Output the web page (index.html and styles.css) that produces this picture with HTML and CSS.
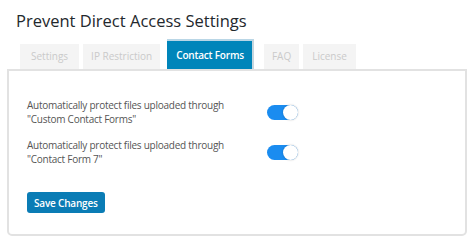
FILE: index.html
```html
<!DOCTYPE html>
<html lang="en">
<head>
    <meta charset="UTF-8">
    <title>Prevent Direct Access Settings</title>
    <link rel="stylesheet" href="styles.css">
</head>
<body>
    <div class="wrap">
        <h1 class="title">Prevent Direct Access Settings</h1>
        <nav class="tabs">
            <a class="tab tab-settings">Settings</a>
            <a class="tab tab-ip">IP Restriction</a>
            <a class="tab active">Contact Forms</a>
            <a class="tab">FAQ</a>
            <a class="tab tab-license">License</a>
        </nav>
        <div class="panel">
            <div class="option-row">
                <span class="label">Automatically protect files uploaded through<br>"Custom Contact Forms"</span>
                <label class="toggle">
                    <input type="checkbox" checked>
                    <span class="slider"></span>
                </label>
            </div>
            <div class="option-row">
                <span class="label">Automatically protect files uploaded through<br>"Contact Form 7"</span>
                <label class="toggle">
                    <input type="checkbox" checked>
                    <span class="slider"></span>
                </label>
            </div>
            <button class="save-btn">Save Changes</button>
        </div>
    </div>
</body>
</html>
```

FILE: styles.css
```css
* {
    margin: 0;
    padding: 0;
    box-sizing: border-box;
}
body {
    font-family: 'Open Sans', 'Liberation Sans', sans-serif;
    background: #fff;
    color: #444;
}
.wrap {
    padding: 9px 7px 0 7px;
}
.title {
    font-size: 16.5px;
    font-weight: 400;
    color: #23282d;
    margin-left: 9px;
    line-height: 23px;
}
.tabs {
    display: flex;
    align-items: flex-end;
    margin-top: 7px;
    padding-left: 13px;
}
.tab {
    display: block;
    height: 25px;
    line-height: 25px;
    padding: 0 8px;
    margin-right: 4px;
    font-size: 10px;
    color: #cacaca;
    background: #f4f4f4;
}
.tab-settings {
    padding: 0 11px;
}
.tab-ip {
    margin-right: 7px;
}
.tab-license {
    padding: 0 9px;
}
.tab.active {
    height: 30px;
    line-height: 28px;
    margin-right: 10px;
    padding: 0 8px 0 9px;
    font-weight: 600;
    letter-spacing: -0.2px;
    color: #fff;
    background: #0085ba;
    border-top: 2px solid #b9d6e6;
    border-right: 2px solid #c6d6de;
}
.panel {
    border: 2px solid #e2e2e2;
    border-radius: 0 0 5px 5px;
    height: 167px;
    padding: 27px 18px 0 18px;
}
.option-row {
    display: flex;
    align-items: center;
    margin-bottom: 12px;
}
.label {
    width: 240px;
    font-size: 10px;
    line-height: 14px;
    letter-spacing: -0.25px;
    color: #555;
}
.toggle {
    position: relative;
    width: 31px;
    height: 15px;
}
.toggle input {
    opacity: 0;
    width: 0;
    height: 0;
}
.slider {
    position: absolute;
    inset: 0;
    background: #ddd;
    border-radius: 8px;
    cursor: pointer;
}
.slider:before {
    position: absolute;
    content: "";
    width: 15px;
    height: 15px;
    top: 0;
    left: 0;
    background: #fff;
    border-radius: 50%;
    box-shadow: 0 0 2px rgba(0, 0, 0, 0.25);
}
input:checked + .slider {
    background: #1a8cf0;
}
input:checked + .slider:before {
    transform: translateX(16px);
}
.save-btn {
    margin-top: 14px;
    height: 21px;
    padding: 0 7px;
    font-family: inherit;
    font-size: 10px;
    font-weight: 600;
    letter-spacing: -0.2px;
    color: #fff;
    background: #0a7cb5;
    border: none;
    border-radius: 3px;
}
```
